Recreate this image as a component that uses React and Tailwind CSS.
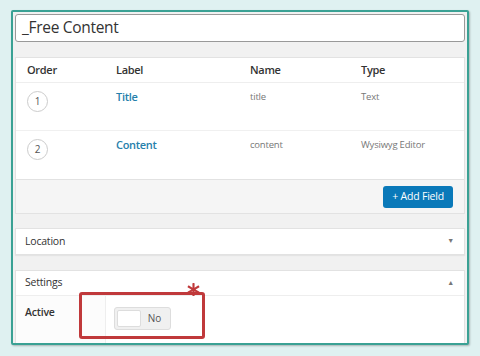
import { FaAsterisk } from "react-icons/fa";

const fields = [
  { order: 1, label: "Title", name: "title", type: "Text" },
  { order: 2, label: "Content", name: "content", type: "Wysiwyg Editor" },
];

function FieldRow({ field, last }) {
  return (
    <div
      className={`flex h-[48px] pt-[6px] ${last ? "" : "border-b border-[#f0f0f0]"}`}
    >
      <div className="w-[100px] pl-[11px] pt-[2px]">
        <span className="flex h-[21px] w-[21px] items-center justify-center rounded-full border border-[#ccc] text-[10px] text-[#555]">
          {field.order}
        </span>
      </div>
      <div className="w-[134px] text-[11px] font-semibold tracking-[-0.3px] text-[#2680ab]">
        {field.label}
      </div>
      <div className="w-[111px] pt-[1px] text-[9.5px] tracking-[-0.2px] text-[#777]">{field.name}</div>
      <div className="pt-[1px] text-[9.5px] tracking-[-0.2px] text-[#777]">{field.type}</div>
    </div>
  );
}

export default function App() {
  return (
    <div
      className="h-[356px] w-[480px] bg-[#dff1f1] pl-[11px] pt-[10px]"
      style={{ fontFamily: '"Open Sans", "Noto Sans", sans-serif' }}
    >
      <div className="h-[335px] w-[458px] overflow-hidden rounded-[2px] border-2 border-[#3aa194] bg-[#f1f1f1] p-[2px] shadow-[1px_1px_2px_rgba(0,0,0,0.25)]">
        <div className="flex h-[28px] items-center rounded-[3px] border border-[#999] bg-white pl-[6px] text-[15.5px] tracking-[-0.3px] text-[#333]">
          _Free Content
        </div>

        <div className="mt-[15px] border border-[#e2e2e2] bg-white">
          <div className="flex h-[25px] items-center border-b border-[#eee] text-[11px] font-semibold tracking-[-0.3px] text-[#333]">
            <div className="w-[100px] pl-[11px]">Order</div>
            <div className="w-[134px]">Label</div>
            <div className="w-[111px]">Name</div>
            <div>Type</div>
          </div>
          {fields.map((f, i) => (
            <FieldRow key={f.order} field={f} last={i === fields.length - 1} />
          ))}
          <div className="flex h-[34px] items-center justify-end border-t border-[#e2e2e2] bg-[#f5f5f5] pr-[11px]">
            <button className="h-[22px] rounded-[3px] bg-[#0a79b9] px-[9px] text-[10.5px] tracking-[-0.2px] text-white">
              + Add Field
            </button>
          </div>
        </div>

        <div className="mt-[14px] flex h-[27px] items-center justify-between border border-[#e2e2e2] bg-white pl-[9px] pr-[10px] text-[10.5px] tracking-[-0.2px] text-[#333] shadow-[0_1px_1px_rgba(0,0,0,0.05)]">
          <span>Location</span>
          <span className="text-[7px] text-[#777]">▼</span>
        </div>

        <div className="mt-[15px] border border-[#e2e2e2] bg-white">
          <div className="flex h-[25px] items-center justify-between border-b border-[#eee] pl-[9px] pr-[10px] text-[10.5px] tracking-[-0.2px] text-[#333]">
            <span>Settings</span>
            <span className="text-[7px] text-[#777]">▲</span>
          </div>
          <div className="relative flex h-[50px]">
            <div className="w-[90px] border-r border-[#eee] bg-[#fcfcfc] pl-[9px] pt-[9px] text-[10.5px] font-semibold tracking-[-0.2px] text-[#333]">
              Active
            </div>
            <div className="pl-[8px] pt-[11px]">
              <div className="flex h-[23px] w-[57px] items-center rounded-[3px] border border-[#ddd] bg-[#f0f0f0] p-[2px]">
                <div className="h-[17px] w-[24px] rounded-[2px] border border-[#ddd] bg-white" />
                <span className="flex-1 text-center text-[10px] text-[#555]">No</span>
              </div>
            </div>
            <div className="absolute left-[63px] top-[-4px] h-[47px] w-[126px] rounded-[3px] border-[3px] border-[#c0393b]" />
            <FaAsterisk className="absolute left-[171px] top-[-13px] text-[13px] text-[#c0393b]" />
          </div>
        </div>
      </div>
    </div>
  );
}
